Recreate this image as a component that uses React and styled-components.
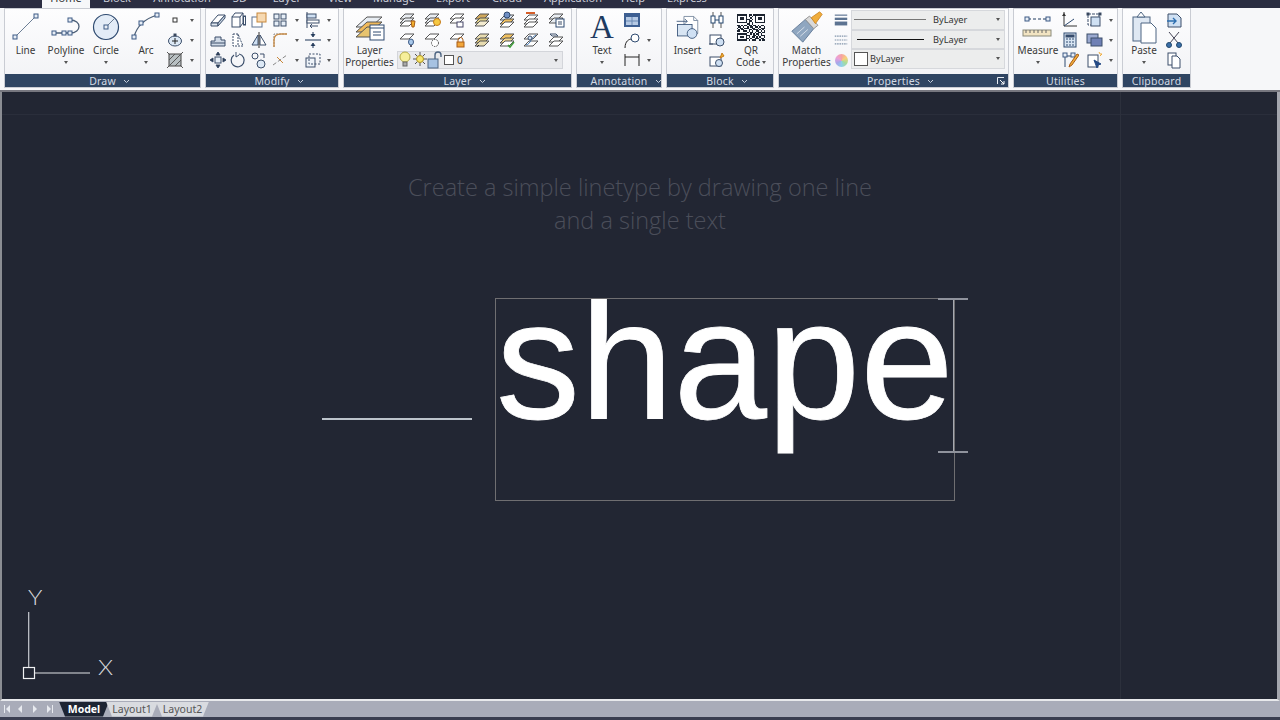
import styled, { createGlobalStyle } from "styled-components"

const GlobalStyle = createGlobalStyle`
html, body { margin: 0; padding: 0; background: #222633; }
#root { width: 1280px; height: 720px; overflow: hidden; }
* { box-sizing: border-box; }
`

const Page = styled.div`
width: 1280px;
height: 720px;
display: flex;
flex-direction: column;
font-family: "Noto Sans", "Liberation Sans", sans-serif;
`
const TabStrip = styled.div`
height: 8px;
flex: none;
display: flex;
padding-left: 42px;
background: #2a2d41;
overflow: hidden;
`
const RibbonTab = styled.div`
width: ${p => p.$w}px;
height: ${p => (p.$active ? 8 : 7)}px;
background: ${p => (p.$active ? "#f6f7f9" : "transparent")};
color: ${p => (p.$active ? "#333" : "#c9ccd8")};
font-size: 11px;
line-height: 11px;
text-align: center;
display: flex;
align-items: flex-end;
justify-content: center;
padding-bottom: ${p => (p.$active ? 5 : 4)}px;
white-space: nowrap;
`
const Ribbon = styled.div`
height: 84px;
flex: none;
display: flex;
gap: 4px;
padding-left: 4px;
background: #f6f7f9;
border-bottom: 2px solid #77777f;
`
const Panel = styled.section`
position: relative;
width: ${p => p.$w}px;
height: 80px;
display: flex;
flex-direction: column;
background: linear-gradient(#fdfdfe, #f1f2f5);
border: 1px solid #c9ccd3;
`
const PanelBody = styled.div`
height: 65px;
display: flex;
padding-top: 1px;
`
const PanelTitle = styled.div`
height: 13px;
display: flex;
align-items: center;
justify-content: center;
background: #2f4562;
color: #d3dae4;
font-size: 10.5px;
line-height: 13px;
padding-top: 1px;
letter-spacing: 0.2px;
`
const ChevronMark = styled.svg`
width: 7px;
height: 5px;
margin-left: 7px;
margin-right: -14px;
flex: none;
`
const Launcher = styled.svg`
position: absolute;
right: 3px;
bottom: 2px;
width: 8px;
height: 8px;
`
const LargeTool = styled.div`
width: ${p => p.$w || 40}px;
margin-left: ${p => p.$ml || 0}px;
display: flex;
flex-direction: column;
align-items: center;
flex: none;
`
const LargeIcon = styled.div`
height: 34px;
width: 100%;
display: flex;
align-items: center;
justify-content: center;
`
const ToolLabel = styled.span`
color: #3a3a3a;
font-size: 10px;
line-height: 12px;
text-align: center;
white-space: nowrap;
`
const Caret = styled.span`
display: block;
width: 0;
height: 0;
margin: ${p => p.$m || "0"};
border-left: 2.5px solid transparent;
border-right: 2.5px solid transparent;
border-top: 3px solid #555;
`
const CaretRow = styled.div`
height: 12px;
display: flex;
align-items: center;
justify-content: center;
`
const IconGrid = styled.div`
display: grid;
grid-template-columns: ${p => p.$cols};
grid-auto-rows: 20px;
margin-left: ${p => p.$ml || 0}px;
flex: none;
`
const Cell = styled.div`
display: flex;
align-items: center;
justify-content: center;
`
const Stack = styled.div`
display: flex;
flex-direction: column;
flex: none;
`
const LayerCombo = styled.div`
width: 166px;
height: 18px;
margin: 1px 0 0 2px;
display: flex;
align-items: center;
padding-right: 4px;
background: #e9eaed;
border: 1px solid #d3d5da;
color: #333;
font-size: 10px;
`
const ComboIcon = styled.span`
display: flex;
margin-left: ${p => p.$ml}px;
flex: none;
`
const PropCombos = styled.div`
width: 154px;
margin-left: 3px;
display: flex;
flex-direction: column;
flex: none;
`
const PropRow = styled.div`
height: 19.5px;
display: flex;
align-items: center;
padding: 0 4px 0 2px;
background: #eceded;
border: 1px solid #d6d8dc;
color: #333;
font-size: 9.2px;
`
const LineSample = styled.span`
display: block;
height: ${p => p.$h}px;
width: ${p => p.$w}px;
margin-left: ${p => p.$ml}px;
background: ${p => p.$c};
flex: none;
`
const ByLayer = styled.span`
margin-left: ${p => p.$ml}px;
flex: 1;
`
const Swatch = styled.span`
width: ${p => p.$s}px;
height: ${p => p.$s}px;
margin-left: ${p => p.$ml || 0}px;
background: #fff;
border: 1px solid #555;
flex: none;
`
const ColorWheel = styled.span`
width: 13px;
height: 13px;
border-radius: 50%;
background: conic-gradient(#f5a3a3, #f7d07a, #a6dc9a, #8fd0e8, #a9a6ea, #eba0d8, #f5a3a3);
display: block;
`
const TextA = styled.span`
font-family: "Liberation Serif", serif;
font-size: 33px;
line-height: 34px;
color: #1e3a60;
`

const CanvasArea = styled.main`
position: relative;
flex: 1;
background: #222633;
border-left: 2px solid #8b8d93;
border-right: 3px solid #a4a6ae;
border-bottom: 2px solid #e8e9ec;
overflow: hidden;
`
const GridH = styled.div`
position: absolute;
left: 0;
right: 0;
top: 22px;
height: 1px;
background: #2a2e3b;
`
const GridV = styled.div`
position: absolute;
top: 0;
bottom: 0;
left: 1118px;
width: 1px;
background: #2c303c;
`
const Note = styled.div`
position: absolute;
left: 0;
width: 1276px;
top: 79px;
text-align: center;
color: #4b4e5a;
font-family: "Open Sans", "Noto Sans", sans-serif;
font-weight: 300;
font-size: 23.5px;
line-height: 33px;
`
const DrawnLine = styled.div`
position: absolute;
left: 320px;
top: 326px;
width: 150px;
height: 2px;
background: #bcc3cb;
`
const TextBox = styled.div`
position: absolute;
left: 493px;
top: 206px;
width: 460px;
height: 203px;
border: 1px solid #6f6e71;
overflow: hidden;
`
const ShapeText = styled.div`
position: absolute;
left: 0;
top: -23px;
color: #fff;
font-family: "Liberation Sans", Arial, sans-serif;
font-size: 168px;
line-height: 168px;
white-space: nowrap;
-webkit-text-stroke: 0.8px #fff;
`
const HeightBar = styled.div`
position: absolute;
left: 951px;
top: 206px;
width: 1px;
height: 155px;
background: #a6a9b1;
`
const HeightTick = styled.div`
position: absolute;
left: 936px;
top: ${p => p.$t}px;
width: 30px;
height: 2px;
background: #8f929c;
`
const UcsDrawing = styled.svg`
position: absolute;
left: 18px;
top: 517px;
width: 80px;
height: 76px;
`
const UcsLetter = styled.span`
position: absolute;
left: ${p => p.$l}px;
top: ${p => p.$t}px;
color: #d5d7da;
font-family: "Lato", "Liberation Sans", sans-serif;
font-weight: 300;
font-size: 21px;
line-height: 21px;
transform: scaleX(1.15);
transform-origin: left center;
`

const LayoutBar = styled.footer`
height: 16px;
flex: none;
display: flex;
align-items: center;
background: #a9acb9;
padding-left: 3px;
`
const NavArrows = styled.svg`
width: 52px;
height: 10px;
flex: none;
margin-right: 4px;
`
const LayoutTab = styled.div`
width: ${p => p.$w}px;
height: 15px;
margin-right: ${p => p.$mr || 0}px;
display: flex;
align-items: center;
justify-content: center;
clip-path: polygon(0 0, 100% 0, calc(100% - 6px) 100%, 6px 100%);
background: ${p => (p.$active ? "#1d2433" : "#d9dbe0")};
color: ${p => (p.$active ? "#fff" : "#555")};
font-weight: ${p => (p.$active ? 700 : 400)};
font-size: 10.5px;
`
const BottomEdge = styled.div`
height: 3px;
flex: none;
background: #3a3e50;
`

const I = ({ s = 18, w, h, vb, children }) => (
  <svg width={w || s} height={h || s} viewBox={vb || `0 0 ${w || s} ${h || s}`} fill="none" stroke="#3c4f6b" strokeWidth="1">
    {children}
  </svg>
)
const Grip = ({ x, y, r = 2 }) => <rect x={x - r} y={y - r} width={r * 2} height={r * 2} fill="#e8eef6" stroke="#3c5a85" />
const Sheet = ({ y = 0, f = "#e9edf2", st = "#555" }) => <polygon points={`2,${y + 8} 7,${y + 3} 16,${y + 3} 11,${y + 8}`} fill={f} stroke={st} />

const icons = {
  line: <I s={32}><line x1="5" y1="26" x2="26" y2="5" stroke="#6d7f96" /><Grip x={5} y={26} /><Grip x={26} y={5} /></I>,
  polyline: <I s={32}><path d="M4 22 H20 M20 9 C32 9 32 22 20 22" stroke="#4d6078" strokeWidth="1.3" /><Grip x={4} y={22} /><Grip x={14} y={22} /><Grip x={20} y={22} /><Grip x={20} y={9} /></I>,
  circle: <I s={32}><circle cx="16" cy="16" r="12.5" fill="#e3ecf7" stroke="#2e4a70" strokeWidth="1.2" /><line x1="16" y1="16" x2="25" y2="7" stroke="#6d7f96" /><Grip x={16} y={16} /></I>,
  arc: <I s={32}><path d="M4 26 Q8 10 27 4" stroke="#4d6078" strokeWidth="1.3" /><Grip x={4} y={26} /><Grip x={11} y={12} /><Grip x={27} y={4} /></I>,
  point: <I><rect x="7" y="7" width="4" height="4" fill="#fff" stroke="#333" /></I>,
  bound: <I><ellipse cx="9" cy="10" rx="6.5" ry="5" fill="#dce8f5" stroke="#3c4f6b" /><path d="M6 10h6M9 7v6" stroke="#222" /><rect x="8" y="3" width="2" height="2" fill="#333" /></I>,
  hatch: <I><rect x="3" y="3" width="12" height="12" fill="#b7bfc2" stroke="#444" /><path d="M3 9l6-6M3 15L15 3M9 15l6-6M1 1l3 3M17 17l-3-3M17 1l-3 3M1 17l3-3" stroke="#555" /></I>,
  erase: <I><polygon points="2,12 9,4 16,4 9,12" fill="#fff" /><polygon points="2,12 9,12 9,15 2,15" fill="#dfe7f0" /><polygon points="9,12 16,4 16,7 9,15" fill="#c8d4e2" /></I>,
  copy3d: <I><rect x="3" y="6" width="8" height="10" fill="#fff" /><path d="M3 6l3-4h8l-3 4M11 16l3-4V2" /><rect x="14.5" y="5" width="2" height="9" /></I>,
  offset: <I><rect x="2" y="6" width="10" height="10" fill="#fff" stroke="#5c7391" /><rect x="7" y="2" width="9" height="9" fill="#f6d9b2" stroke="#c8873a" /></I>,
  array: <I><rect x="3" y="3" width="5" height="5" fill="#e6eef7" /><rect x="10" y="3" width="5" height="5" fill="#e6eef7" /><rect x="3" y="10" width="5" height="5" fill="#e6eef7" /><rect x="10" y="10" width="5" height="5" fill="#e6eef7" /></I>,
  align: <I><line x1="3" y1="1" x2="3" y2="17" /><rect x="3" y="3" width="9" height="4" fill="#cfe0f3" /><rect x="3" y="9" width="12" height="3" fill="#fff" /><path d="M14 15H6M8 13l-2 2 2 2" /></I>,
  stretch: <I><path d="M2 15V10h4V6h6v3h4v6z" fill="#cfd9e6" /><line x1="2" y1="12" x2="16" y2="12" /></I>,
  scale: <I><polygon points="4,3 9,3 14,15 4,15" fill="#fff" strokeDasharray="2 1" /><line x1="9" y1="3" x2="9" y2="15" strokeDasharray="2 1" /></I>,
  mirror: <I><polygon points="8,4 8,14 2,14" fill="#cfe0f3" /><polygon points="10,4 10,14 16,14" fill="#fff" /><line x1="9" y1="1" x2="9" y2="17" stroke="#333" /></I>,
  fillet: <I><path d="M3 16V3h13" stroke="#888" strokeDasharray="2 1" /><path d="M3 16V9Q3 3 10 3h6" stroke="#c98f4c" strokeWidth="1.4" /></I>,
  trimV: <I><line x1="1" y1="9" x2="17" y2="9" stroke="#1d3557" /><path d="M9 1v4M9 13v4" stroke="#1d3557" /><path d="M7 3l2 3 2-3M7 15l2-3 2 3" fill="#1d3557" /></I>,
  move: <I><rect x="6" y="6" width="6" height="6" fill="#e6eef7" /><path d="M9 1l2 3H7zM9 17l2-3H7zM1 9l3 2V7zM17 9l-3 2V7z" fill="#1f2f45" /></I>,
  rotate: <I><path d="M5 4a6.5 6.5 0 1 0 5-1" strokeWidth="1.2" /><path d="M7 1v5l3-2" fill="#fff" /></I>,
  scale2: <I><circle cx="5" cy="5" r="3" /><circle cx="11" cy="13" r="4" fill="#dce8f5" /><path d="M10 3h4v4" /></I>,
  explode: <I><path d="M2 14L16 4" stroke="#888" strokeDasharray="4 2" /><path d="M6 6l6 6" stroke="#c8873a" /></I>,
  chamfer: <I><rect x="2" y="7" width="9" height="9" fill="#eef3f9" /><rect x="5" y="3" width="11" height="10" strokeDasharray="2 1.5" /></I>,
  lp1: <I><Sheet y={0} /><Sheet y={4} /><Sheet y={7} f="#fff" /><path d="M13 10h4l-1 6h-2z" fill="#f2b02e" stroke="#a85c16" /></I>,
  lp2: <I><Sheet y={0} /><Sheet y={4} /><Sheet y={7} f="#fff" /><circle cx="14" cy="11" r="3.5" fill="#f5c842" stroke="#c47a18" /></I>,
  lp3: <I><Sheet y={0} f="#fff" /><Sheet y={4} f="#fff" /><rect x="9" y="11" width="6" height="5" fill="#fff" stroke="#446" /></I>,
  lp4: <I><Sheet y={0} f="#d0a85c" /><Sheet y={4} f="#e2d28a" /><Sheet y={7} f="#f4ecd0" /></I>,
  lp5: <I><Sheet y={1} f="#d8e4f2" /><Sheet y={5} f="#f0c060" /><Sheet y={8} f="#fff" /><circle cx="9" cy="4" r="3" fill="#6f8fc4" stroke="#2e4a70" /></I>,
  lp6: <I><rect x="4" y="1" width="9" height="2" fill="#d65f2a" stroke="none" /><Sheet y={1} f="#fff" /><Sheet y={5} f="#fff" /><Sheet y={8} f="#fff" /></I>,
  lp7: <I><Sheet y={0} /><Sheet y={4} /><rect x="9" y="8" width="8" height="8" fill="#fff" stroke="#2e4a70" /><path d="M11 11h4M11 13h4" /></I>,
  lb1: <I><Sheet y={0} f="#fff" /><ellipse cx="13" cy="11" rx="2.5" ry="3" fill="#a8c8ea" stroke="#3c5a85" /><rect x="12" y="14" width="2" height="2" fill="#556" stroke="none" /></I>,
  lb2: <I><Sheet y={0} f="#fff" /><circle cx="12" cy="12" r="3.5" fill="#fff" stroke="#444" strokeDasharray="1.5 1" /></I>,
  lb3: <I><Sheet y={0} f="#fff" /><path d="M10 11V9a2.5 2.5 0 0 1 5 0v2" stroke="#a85c16" /><rect x="9" y="11" width="7" height="5" fill="#f2a63a" stroke="#a85c16" /></I>,
  lb4: <I><Sheet y={0} f="#e8dcb0" /><Sheet y={4} f="#d8c27a" /><Sheet y={7} f="#e8dcb0" /><path d="M4 16l2-2" stroke="#222" /></I>,
  lb5: <I><Sheet y={0} f="#f0c060" /><Sheet y={4} f="#f4d890" /><Sheet y={7} f="#fff" /><path d="M10 14l2 2 4-5" stroke="#3f9b3a" strokeWidth="1.6" /></I>,
  lb6: <I><Sheet y={0} f="#fff" /><Sheet y={7} f="#fff" /><path d="M4 14C9 13 9 6 14 4" stroke="#3c6fa8" /><circle cx="8" cy="7" r="2" fill="#cfe0f3" /></I>,
  lb7: <I><path d="M3 3h6l2 2h-6z" fill="#fff" /><Sheet y={3} f="#fff" /><Sheet y={7} f="#fff" /></I>,
  insert: <I w={28} h={26} vb="0 0 34 32"><path d="M12 3h12l5 5v16H12z" fill="#fff" stroke="#6d7f96" /><path d="M24 3v5h5" stroke="#6d7f96" /><rect x="4" y="13" width="18" height="14" fill="#d8e5f3" stroke="#2e4a70" /><circle cx="22" cy="24" r="6" fill="#cfe0f3" stroke="#2e4a70" /><path d="M3 9h13M13 6l3 3-3 3" stroke="#2e4a70" /></I>,
  blockEdit: <I><path d="M5 1v16M13 1v16" stroke="#555" /><rect x="3" y="5" width="4" height="7" fill="#fff" stroke="#24466e" /><rect x="11" y="5" width="4" height="7" fill="#fff" stroke="#24466e" /><path d="M7 9h4" stroke="#24466e" /></I>,
  createBlock: <I><rect x="2" y="4" width="11" height="9" fill="#fff" /><circle cx="12" cy="11" r="4" fill="#cfe0f3" /><path d="M1 13h4" /></I>,
  attBlock: <I><rect x="2" y="6" width="11" height="9" fill="#fff" /><circle cx="11" cy="12" r="3.5" fill="#cfe0f3" /><path d="M14 2l-2 5 4-2z" fill="#f2b02e" stroke="#c47a18" /></I>,
  brush: <I w={36} h={32} vb="0 0 42 38"><polygon points="3,24 19,10 29,21 16,37" fill="#8fa6c0" stroke="#5c7391" /><path d="M9 27l9-8M13 30l9-8" stroke="#dfe6ee" /><polygon points="19,10 24,6 34,17 29,21" fill="#d9d9d9" stroke="#888" /><path d="M26 8l10-7 3 3-8 11z" fill="#f0ad3c" stroke="#c98426" /></I>,
  weight: <I><rect x="1" y="2" width="16" height="1.5" fill="#5c7391" stroke="none" /><rect x="1" y="6" width="16" height="3" fill="#5c7391" stroke="none" /><rect x="1" y="11" width="16" height="5" fill="#5c7391" stroke="none" /></I>,
  linetype: <I><path d="M1 4h16M1 9h16M1 14h16" stroke="#8094aa" strokeDasharray="2 1" strokeWidth="1.5" /></I>,
  measure: <I w={34} h={32}><path d="M7 8h19" stroke="#1f3a5f" strokeDasharray="3 2" /><Grip x={6} y={8} /><Grip x={27} y={8} /><rect x="2" y="19" width="28" height="6" fill="#f2e4c2" stroke="#8a8a7a" /><path d="M5 19v3M9 19v3M13 19v3M17 19v3M21 19v3M25 19v3" stroke="#666" /></I>,
  angle: <I><path d="M3 1v14h13" stroke="#333" /><path d="M3 15L13 8" stroke="#2e4a70" /><path d="M3 2L1 5h4z" fill="#333" stroke="none" /></I>,
  calc: <I><rect x="3" y="2" width="12" height="14" fill="#d8e5f3" stroke="#2e4a70" /><rect x="5" y="4" width="8" height="2" fill="#2e4a70" /><path d="M5 8h8M5 11h8M5 14h8" stroke="#2e4a70" strokeDasharray="2 1" /></I>,
  dist: <I><path d="M4 16V5h8" stroke="#2e4a70" /><Grip x={4} y={4} /><Grip x={12} y={4} /><path d="M16 3l-7 10-1 3 3-2 7-10z" fill="#f0ad3c" stroke="#a85c16" /></I>,
  group: <I><rect x="3" y="3" width="11" height="11" fill="#fff" strokeDasharray="3 1" /><rect x="6" y="6" width="9" height="9" fill="#cfe0f3" /><rect x="2" y="2" width="2" height="2" fill="#333" /><rect x="14" y="2" width="2" height="2" fill="#333" /></I>,
  layerWin: <I><rect x="2" y="3" width="11" height="9" fill="#9aa9d0" /><rect x="6" y="7" width="11" height="8" fill="#6f80b5" /></I>,
  select: <I><rect x="3" y="4" width="10" height="12" fill="#fff" /><path d="M9 9l7 4-3 1-1 3z" fill="#244a85" stroke="#244a85" /><path d="M14 1l1 2 2 0-2 2" stroke="#f0ad3c" /></I>,
  paste: <I s={34}><rect x="6" y="7" width="17" height="24" fill="#dfe8f3" stroke="#4d6582" /><path d="M10 7l4-5 4 5z" fill="#fff" stroke="#4d6582" /><path d="M14 13h10l5 5v15H14z" fill="#fff" stroke="#4d6582" /></I>,
  cutTo: <I><path d="M3 3h9l4 4v9H3z" fill="#cfe0f3" /><path d="M2 10h9M8 7l3 3-3 3" stroke="#2e6fb0" strokeWidth="1.4" /></I>,
  scissors: <I><path d="M4 1l9 11M14 1L5 12" stroke="#445" /><circle cx="4" cy="14" r="2.5" fill="#3a6ea8" stroke="#244a70" /><circle cx="14" cy="14" r="2.5" fill="#3a6ea8" stroke="#244a70" /></I>,
  copy: <I><rect x="3" y="2" width="8" height="12" fill="#fff" /><path d="M7 5h5l3 3v9H7z" fill="#fff" /></I>,
  bulb: <I><ellipse cx="7" cy="6" rx="5" ry="5" fill="#f6ef9a" stroke="#b6ad4a" /><rect x="5" y="11" width="4" height="4" fill="#aaa" stroke="#666" /></I>,
  sun: <I><circle cx="8" cy="8" r="3.5" fill="#f7e66a" stroke="#a88d1e" /><path d="M8 1v3M8 12v3M1 8h3M12 8h3M3 3l2 2M11 11l2 2M13 3l-2 2M5 11l-2 2" stroke="#555" /></I>,
  lock: <I><path d="M8 8V4a3 3 0 0 1 6 0v2" stroke="#4d6582" strokeWidth="1.4" /><rect x="1" y="8" width="10" height="9" fill="#a6c2e2" stroke="#4d6582" /></I>,
}

const Tool = ({ name, label, caret, w }) => (
  <LargeTool $w={w}>
    <LargeIcon>{icons[name]}</LargeIcon>
    <ToolLabel>{label}</ToolLabel>
    {caret && <CaretRow><Caret /></CaretRow>}
  </LargeTool>
)

const Cells = ({ items }) => items.map((n, i) => (
  <Cell key={i}>{n === "^" ? <Caret /> : n ? icons[n] : null}</Cell>
))

const Title = ({ children, more = true }) => (
  <PanelTitle>
    {children}
    {more && <ChevronMark viewBox="0 0 7 5" fill="none" stroke="#c5cedb"><path d="M1 1l2.5 2.5L6 1" /></ChevronMark>}
  </PanelTitle>
)

const QrCode = () => {
  const rows = [
    "1111111011011111111",
    "1000001010101000001",
    "1011101001001011101",
    "1011101110101011101",
    "1000001011001000001",
    "1111111010101111111",
    "0000000110100000000",
    "1101011011011010110",
    "0110100101101101001",
    "1011011100110010111",
    "0101100011011101010",
    "1100111010100110101",
    "0000000101101011011",
    "1111111001010110100",
    "1000001110011010111",
    "1011101010110101001",
    "1000001101001110110",
    "1111111010111001011",
  ]
  return (
    <svg width="28" height="27" viewBox="0 0 19 18" shapeRendering="crispEdges">
      {rows.map((r, y) => r.split("").map((c, x) => c === "1" && <rect key={x + "-" + y} x={x} y={y} width="1" height="1" fill="#1c2430" />))}
    </svg>
  )
}

const tabs = [
  ["Home", 48], ["Block", 54], ["Annotation", 76], ["3D", 40], ["Layer", 54], ["View", 52],
  ["Manage", 56], ["Export", 62], ["Cloud", 46], ["Application", 86], ["Help", 34], ["Express", 74],
]

export default function App() {
  return (
    <Page>
      <GlobalStyle />
      <TabStrip>
        {tabs.map(([t, w], i) => <RibbonTab key={t} $w={w} $active={i === 0}>{t}</RibbonTab>)}
      </TabStrip>

      <Ribbon>
        <Panel $w={197}>
          <PanelBody>
            <Tool name="line" label="Line" w={41} />
            <Tool name="polyline" label="Polyline" caret />
            <Tool name="circle" label="Circle" caret />
            <Tool name="arc" label="Arc" caret />
            <IconGrid $cols="18px 16px">
              <Cells items={["point", "^", "bound", "^", "hatch", "^"]} />
            </IconGrid>
          </PanelBody>
          <Title>Draw</Title>
        </Panel>

        <Panel $w={134}>
          <PanelBody>
            <IconGrid $cols="20px 20px 21px 22px 12px 20px 12px" $ml={2}>
              <Cells items={[
                "erase", "copy3d", "offset", "array", "^", "align", "^",
                "stretch", "scale", "mirror", "fillet", "^", "trimV", "^",
                "move", "rotate", "scale2", "explode", "^", "chamfer", "^",
              ]} />
            </IconGrid>
          </PanelBody>
          <Title>Modify</Title>
        </Panel>

        <Panel $w={229}>
          <PanelBody>
            <LargeTool $w={51}>
              <LargeIcon>
                <svg width="30" height="30" viewBox="0 0 30 30" stroke="#555">
                  <polygon points="1,15 12,5 27,5 16,15" fill="#e8edf3" />
                  <polygon points="1,20 12,10 27,10 16,20" fill="#f0b95a" />
                  <polygon points="1,25 12,15 27,15 16,25" fill="#e8c46e" />
                  <rect x="15" y="13" width="14" height="15" fill="#fff" stroke="#2e4a70" />
                  <path d="M15 16h14M18 20h8M18 23h8" stroke="#2e4a70" />
                </svg>
              </LargeIcon>
              <ToolLabel>Layer</ToolLabel>
              <ToolLabel>Properties</ToolLabel>
            </LargeTool>
            <Stack>
              <IconGrid $cols="repeat(7, 24.8px)">
                <Cells items={["lp1", "lp2", "lp3", "lp4", "lp5", "lp6", "lp7", "lb1", "lb2", "lb3", "lb4", "lb5", "lb6", "lb7"]} />
              </IconGrid>
              <LayerCombo>
                <ComboIcon $ml={0}>{icons.bulb}</ComboIcon>
                <ComboIcon $ml={-4}>{icons.sun}</ComboIcon>
                <ComboIcon $ml={-3}>{icons.lock}</ComboIcon>
                <Swatch $s={10} $ml={-1} />
                <ByLayer $ml={3}>0</ByLayer>
                <Caret />
              </LayerCombo>
            </Stack>
          </PanelBody>
          <Title>Layer</Title>
        </Panel>

        <Panel $w={86}>
          <PanelBody>
            <LargeTool $w={50}>
              <LargeIcon><TextA>A</TextA></LargeIcon>
              <ToolLabel>Text</ToolLabel>
              <CaretRow><Caret /></CaretRow>
            </LargeTool>
            <IconGrid $cols="18px 16px" $ml={-4}>
              <Cell>
                <svg width="16" height="14" viewBox="0 0 16 14"><rect width="16" height="14" fill="#3d5f92" /><rect x="2" y="4" width="12" height="8" fill="#b5c9e4" /><path d="M8 4v8M2 8h12" stroke="#6a89b3" /></svg>
              </Cell>
              <Cell />
              <Cell>
                <svg width="18" height="18" viewBox="0 0 18 18" fill="none" stroke="#222"><path d="M2 17C2 10 6 8 9 8" /><circle cx="12" cy="7" r="4" fill="#fff" stroke="#2e4a70" /></svg>
              </Cell>
              <Cell><Caret /></Cell>
              <Cell>
                <svg width="16" height="14" viewBox="0 0 16 14" fill="none" stroke="#222"><path d="M1 1v12M15 1v12M1 4h14" /></svg>
              </Cell>
              <Cell><Caret /></Cell>
            </IconGrid>
          </PanelBody>
          <Title>Annotation</Title>
        </Panel>

        <Panel $w={108}>
          <PanelBody>
            <Tool name="insert" label="Insert" w={41} />
            <IconGrid $cols="18px">
              <Cells items={["blockEdit", "createBlock", "attBlock"]} />
            </IconGrid>
            <LargeTool $w={44} $ml={3}>
              <LargeIcon><QrCode /></LargeIcon>
              <ToolLabel>QR</ToolLabel>
              <CaretRow>
                <ToolLabel>Code</ToolLabel>
                <Caret $m="0 0 0 2px" />
              </CaretRow>
            </LargeTool>
          </PanelBody>
          <Title>Block</Title>
        </Panel>

        <Panel $w={231}>
          <PanelBody>
            <LargeTool $w={55}>
              <LargeIcon>{icons.brush}</LargeIcon>
              <ToolLabel>Match</ToolLabel>
              <ToolLabel>Properties</ToolLabel>
            </LargeTool>
            <IconGrid $cols="14px">
              <Cell>{icons.weight}</Cell>
              <Cell>{icons.linetype}</Cell>
              <Cell><ColorWheel /></Cell>
            </IconGrid>
            <PropCombos>
              <PropRow>
                <LineSample $w={72} $h={1} $ml={0} $c="#777" />
                <ByLayer $ml={7}>ByLayer</ByLayer>
                <Caret />
              </PropRow>
              <PropRow>
                <LineSample $w={67} $h={1} $ml={3} $c="#111" />
                <ByLayer $ml={9}>ByLayer</ByLayer>
                <Caret />
              </PropRow>
              <PropRow>
                <Swatch $s={14} />
                <ByLayer $ml={2}>ByLayer</ByLayer>
                <Caret />
              </PropRow>
            </PropCombos>
          </PanelBody>
          <Title>Properties</Title>
          <Launcher viewBox="0 0 8 8" fill="none" stroke="#e6ebf2">
            <path d="M0.5 7V0.5H7" /><path d="M3 3l4 4M7 4v3H4" stroke="#fff" />
          </Launcher>
        </Panel>

        <Panel $w={105}>
          <PanelBody>
            <Tool name="measure" label="Measure" caret w={48} />
            <IconGrid $cols="20px 28px 6px" $ml={-2}>
              <Cells items={["angle", "group", "^", "calc", "layerWin", "^", "dist", "select", "^"]} />
            </IconGrid>
          </PanelBody>
          <Title more={false}>Utilities</Title>
        </Panel>

        <Panel $w={69}>
          <PanelBody>
            <Tool name="paste" label="Paste" caret w={42} />
            <IconGrid $cols="18px">
              <Cells items={["cutTo", "scissors", "copy"]} />
            </IconGrid>
          </PanelBody>
          <Title more={false}>Clipboard</Title>
        </Panel>
      </Ribbon>

      <CanvasArea>
        <GridH />
        <GridV />
        <Note>Create a simple linetype by drawing one line<br />and a single text</Note>
        <DrawnLine />
        <TextBox>
          <ShapeText>shape</ShapeText>
        </TextBox>
        <HeightBar />
        <HeightTick $t={206} />
        <HeightTick $t={359} />
        <UcsDrawing viewBox="0 0 80 76" fill="none" stroke="#c9ccd2">
          <path d="M8.7 3V59" strokeWidth="1.2" />
          <path d="M14 64H70" stroke="#e0e2e6" strokeWidth="1.2" />
          <rect x="3.5" y="58.5" width="11" height="11" stroke="#f0f1f3" strokeWidth="1.2" />
        </UcsDrawing>
        <UcsLetter $l={26} $t={494}>Y</UcsLetter>
        <UcsLetter $l={96} $t={564}>X</UcsLetter>
      </CanvasArea>

      <LayoutBar>
        <NavArrows viewBox="0 0 52 10" fill="#e8eaef">
          <path d="M1 1h1v8H1zM7 1v8L3 5zM19 1v8l-4-4zM30 1v8l4-4zM44 1v8l4-4zM49 1h1v8h-1z" />
        </NavArrows>
        <LayoutTab $w={50} $active $mr={-3}>Model</LayoutTab>
        <LayoutTab $w={52} $mr={-2}>Layout1</LayoutTab>
        <LayoutTab $w={53}>Layout2</LayoutTab>
      </LayoutBar>
      <BottomEdge />
    </Page>
  )
}
